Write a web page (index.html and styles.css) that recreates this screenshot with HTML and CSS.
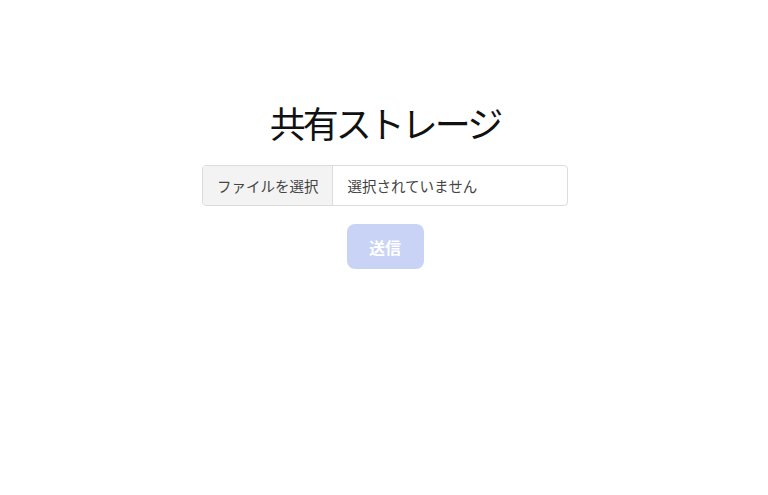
FILE: index.html
```html
<!DOCTYPE html>
<html lang="ja">
	<head>
		<meta charset="UTF-8" />
		<title>共有ストレージ</title>
		<link rel="stylesheet" href="styles.css">
	</head>
	<body>
		<div class="upload-box">
			<h1>共有ストレージ</h1>
			<label class="file-field">
				<span class="file-btn">ファイルを選択</span>
				<span class="file-name">選択されていません</span>
			</label>
			<button class="send-btn" disabled>送信</button>
		</div>
	</body>
</html>
```

FILE: styles.css
```css
body {
	margin: 0;
	font-family: "Noto Sans CJK JP", "Noto Sans", sans-serif;
	background: #fff;
	color: #212529;
}
.upload-box {
	display: flex;
	flex-direction: column;
	align-items: center;
	padding-top: 101px;
	padding-left: 2px;
}
h1 {
	font-size: 36px;
	font-weight: 400;
	line-height: 1.2;
	letter-spacing: -3px;
	margin: 0 0 21px;
	color: #111;
}
.file-field {
	display: flex;
	width: 366px;
	height: 41px;
	box-sizing: border-box;
	border: 1px solid #dcdcdc;
	border-radius: 4px;
	overflow: hidden;
	font-size: 14.5px;
	color: #444;
}
.file-btn {
	display: flex;
	align-items: center;
	padding: 0 13px 0 14px;
	background: #f3f3f3;
	border-right: 1px solid #dcdcdc;
}
.file-name {
	display: flex;
	align-items: center;
	padding: 0 15px;
}
.send-btn {
	margin-top: 18px;
	width: 77px;
	height: 45px;
	border: none;
	border-radius: 8px;
	background: #c8d3f5;
	color: #fff;
	font-family: inherit;
	font-size: 16px;
	font-weight: 700;
}
```
